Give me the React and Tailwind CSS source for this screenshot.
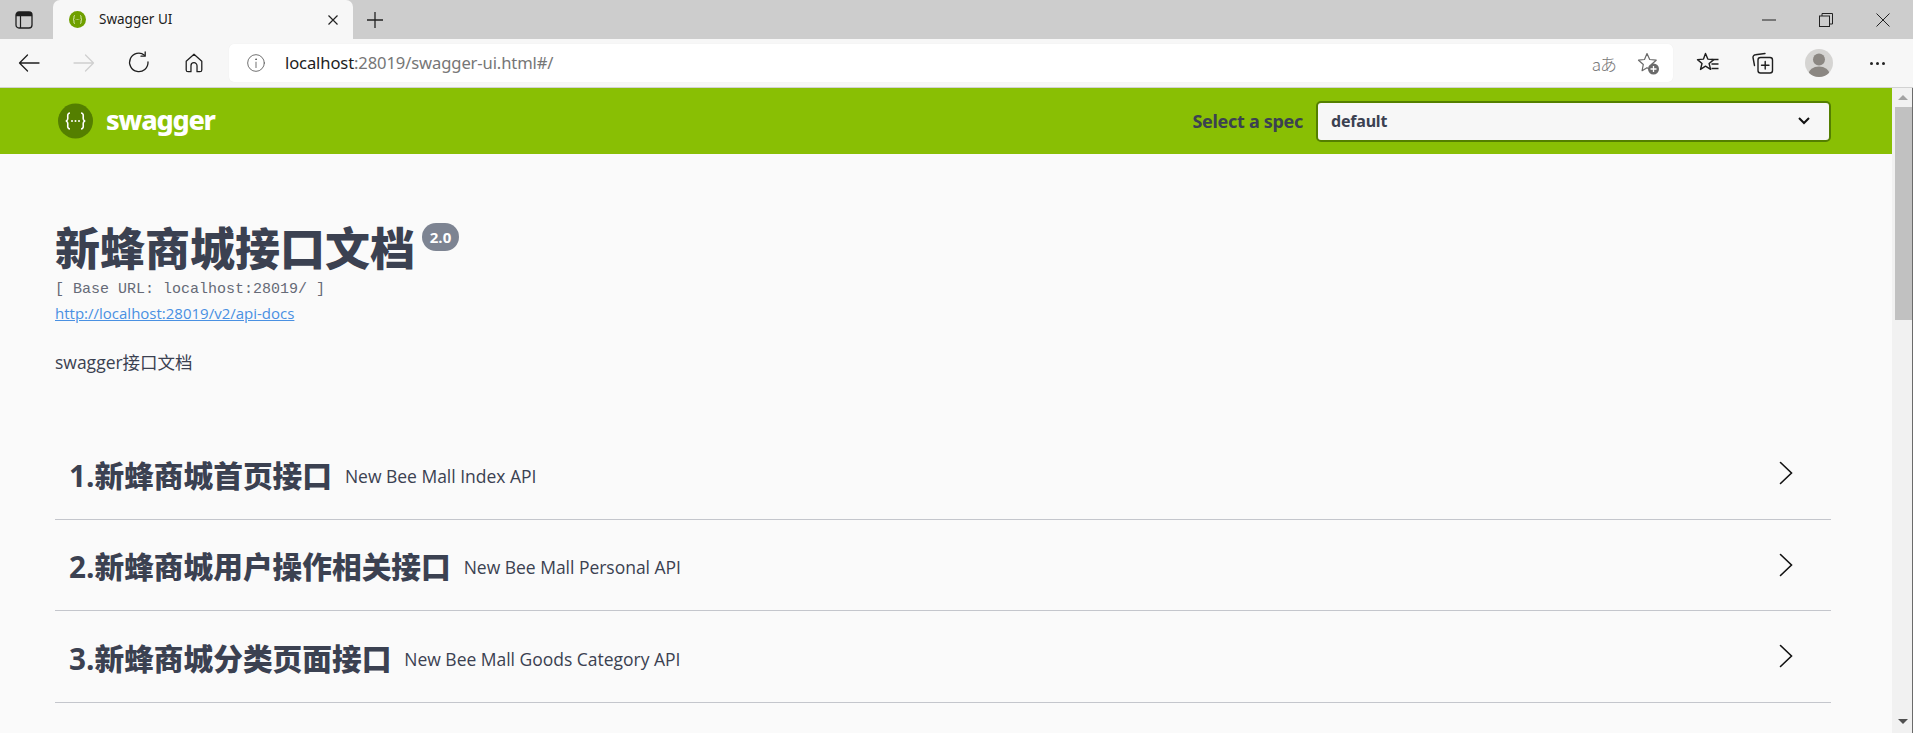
import React from "react";

function Icon({ size = 24, children, stroke = "#1f1f1f", sw = 1.4 }) {
  return (
    <svg width={size} height={size} viewBox="0 0 24 24" fill="none" stroke={stroke} strokeWidth={sw} strokeLinecap="round" strokeLinejoin="round">
      {children}
    </svg>
  );
}

function ToolButton({ children }) {
  return <div className="w-[55px] h-full flex items-center justify-center shrink-0">{children}</div>;
}

function Favicon() {
  return (
    <svg width="17" height="17" viewBox="0 0 17 17">
      <circle cx="8.5" cy="8.5" r="8.5" fill="#6fa000" />
      <path d="M6 4.5c-1.4 0-1 1.6-1 2.6 0 .8-.6 1.4-1 1.4.4 0 1 .6 1 1.4 0 1-.4 2.600 1 2.600M11 4.500c1.400 0 1 1.600 1 2.600 0 .8.600 1.400 1 1.400-.4 0-1 .6-1 1.400 0 1 .4 2.600-1 2.600" fill="none" stroke="#e8f2cc" strokeWidth="0.9" />
      <path d="M6.800 8.500h.6M8.200 8.500h.6M9.600 8.500h.6" stroke="#e8f2cc" strokeWidth="0.9" />
    </svg>
  );
}

function TabBar() {
  return (
    <div className="h-[39px] bg-[#cdcdcd] flex items-end shrink-0 relative">
      <div className="w-[53px] h-full flex items-center justify-center pr-[5px]">
        <svg width="18" height="18" viewBox="0 0 18 18" fill="none">
          <rect x="1" y="1" width="16" height="16" rx="3" stroke="#1f1f1f" strokeWidth="1.3" />
          <path d="M1 5.200V4a3 3 0 0 1 3-3h10a3 3 0 0 1 3 3v1.200z" fill="#1f1f1f" />
          <path d="M5.500 5v12" stroke="#1f1f1f" strokeWidth="1.2" />
        </svg>
      </div>
      <div className="w-[300px] h-full bg-[#f7f7f7] rounded-t-[7px] flex items-center pl-[16px] pr-[14px]">
        <Favicon />
        <span className="ml-[13px] text-[13.5px] text-[#1c1c1c] font-['Noto_Sans',sans-serif]">Swagger UI</span>
        <svg className="ml-auto" width="12" height="12" viewBox="0 0 12 12" stroke="#222" strokeWidth="1.2"><path d="M1.500 1.500l9 9M10.500 1.500l-9 9" /></svg>
      </div>
      <div className="ml-[13px] h-full flex items-center">
        <svg width="18" height="18" viewBox="0 0 18 18" stroke="#222" strokeWidth="1.3"><path d="M9 1v16M1 9h16" /></svg>
      </div>
      <div className="ml-auto h-full flex items-center pr-[23px]">
        <svg width="14" height="2" viewBox="0 0 14 2" stroke="#222"><path d="M0 1h14" /></svg>
        <svg className="ml-[43px]" width="14" height="14" viewBox="0 0 14 14" fill="none" stroke="#222"><rect x="0.5" y="3" width="10" height="10.500" /><path d="M3 3V.5h10.500V11H11" /></svg>
        <svg className="ml-[43px]" width="14" height="14" viewBox="0 0 14 14" stroke="#222"><path d="M.5.5l13 13M13.500.5l-13 13" /></svg>
      </div>
    </div>
  );
}

function AddressBar() {
  return (
    <div className="ml-[8px] w-[1444px] h-[38px] bg-white rounded-[5px] shrink-0 flex items-center pl-[17px] pr-[13px] shadow-[0_0_1px_rgba(0,0,0,0.08)]">
      <Icon size={20} stroke="#555" sw={1}>
        <circle cx="12" cy="12" r="10" />
        <path d="M12 11v6.500" />
        <circle cx="12" cy="7.500" r="0.5" fill="#555" />
      </Icon>
      <div className="ml-[19px] text-[16.6px] text-[#767676] font-['Noto_Sans',sans-serif] tracking-[-0.12px]">
        <span className="text-[#1d1d1d]">localhost</span>:28019/swagger-ui.html#/
      </div>
      <span className="ml-auto text-[17px] leading-none text-[#7a7a7a] font-light font-['Noto_Sans_CJK_JP',sans-serif] tracking-[-1px]">aあ</span>
      <div className="ml-[20px]">
        <svg width="24" height="24" viewBox="0 0 24 24" fill="none">
          <path d="M11 2.500l2.700 6 6.500.7-4.800 4.300 1.300 6.400-5.700-3.200-4.900 3 1.200-6.200L2.500 9.200l6-.7z" stroke="#6a6a6a" strokeWidth="1.2" strokeLinejoin="round" />
          <circle cx="17.500" cy="18" r="5.500" fill="#6a6a6a" />
          <path d="M17.500 15v6M14.500 18h6" stroke="#fff" strokeWidth="1.3" />
        </svg>
      </div>
    </div>
  );
}

function Toolbar() {
  return (
    <div className="h-[49px] bg-[#f7f7f7] border-b border-[#d2d2d2] flex items-center shrink-0 pl-[1px]">
      <ToolButton>
        <Icon size={24} sw={1.3}><path d="M22 12H2.500M10.500 4l-8 8 8 8" /></Icon>
      </ToolButton>
      <ToolButton>
        <Icon size={24} sw={1.3} stroke="#d0d0d0"><path d="M2 12h19.500M13.500 4l8 8-8 8" /></Icon>
      </ToolButton>
      <ToolButton>
        <Icon size={24} sw={1.3}>
          <path d="M17.500 4.200A9.200 9.200 0 1 0 21 11" />
          <path d="M18.200 1v4.200H14" />
        </Icon>
      </ToolButton>
      <ToolButton>
        <Icon size={22} sw={1.4}>
          <path d="M12 2.500l8.500 7.500v9.500a2 2 0 0 1-2 2h-3.200V15a3.300 3.300 0 0 0-6.600 0v6.500H5.500a2 2 0 0 1-2-2V10z" />
        </Icon>
      </ToolButton>
      <AddressBar />
      <div className="w-[7px] shrink-0" />
      <div className="flex items-center h-full">
        <ToolButton>
          <svg width="24" height="24" viewBox="0 0 24 24" fill="none" stroke="#1f1f1f" strokeWidth="1.4" strokeLinejoin="round" strokeLinecap="round">
            <path d="M9.500 2.500l2.300 5.600 6 .5-4.700 3.900 1.500 5.900-5.100-3.200-5 3.200 1.500-5.900L1.500 8.600l6-.5z" />
            <path d="M15.500 8.500h7M15.500 13h7M15.500 17.500h7" strokeLinecap="butt" />
          </svg>
        </ToolButton>
        <div className="w-[54px] h-full flex items-center justify-center shrink-0">
          <svg width="24" height="24" viewBox="0 0 24 24" fill="none" stroke="#1f1f1f" strokeWidth="1.4" strokeLinejoin="round" strokeLinecap="round">
            <rect x="8" y="6.500" width="14.500" height="15.500" rx="2.500" />
            <path d="M15 2.500l-9.500 1.300A2.500 2.500 0 0 0 3 6.500l1.500 8" />
            <path d="M15.200 10.500v7.500M11.500 14.200H19" />
          </svg>
        </div>
        <div className="w-[60px] h-full flex items-center justify-center shrink-0">
          <svg width="28" height="28" viewBox="0 0 28 28">
            <circle cx="14" cy="14" r="14" fill="#d5d4d2" />
            <clipPath id="pf"><circle cx="14" cy="14" r="14" /></clipPath>
            <g clipPath="url(#pf)" fill="#8b8782">
              <circle cx="14" cy="10.500" r="6" />
              <ellipse cx="14" cy="25" rx="10.500" ry="7.500" />
            </g>
          </svg>
        </div>
        <div className="w-[57px] h-full flex items-center justify-center gap-[3px] shrink-0">
          <span className="w-[3px] h-[3px] rounded-full bg-[#222]" />
          <span className="w-[3px] h-[3px] rounded-full bg-[#222]" />
          <span className="w-[3px] h-[3px] rounded-full bg-[#222]" />
        </div>
      </div>
    </div>
  );
}

function TopBar() {
  return (
    <div className="h-[66px] bg-[#89bf04] flex items-center pl-[58px] pr-[61px] shrink-0">
      <svg width="35" height="36" viewBox="0 0 35 36">
        <circle cx="17.500" cy="18" r="17.500" fill="#547f00" />
        <path d="M12 10c-3 0-2.200 3.300-2.200 5.200 0 1.500-1.200 2.800-2.100 2.800.9 0 2.100 1.300 2.100 2.800C9.800 22.700 9 26 12 26M23 10c3 0 2.200 3.300 2.200 5.200 0 1.500 1.200 2.800 2.100 2.800-.9 0-2.100 1.300-2.100 2.800 0 1.900.8 5.200-2.200 5.200" fill="none" stroke="#fff" strokeWidth="1.6" />
        <circle cx="14" cy="18" r="1" fill="#fff" />
        <circle cx="17.500" cy="18" r="1" fill="#fff" />
        <circle cx="21" cy="18" r="1" fill="#fff" />
      </svg>
      <span className="ml-[13px] text-[27px] font-extrabold text-white font-['Noto_Sans',sans-serif] tracking-[-1.2px] leading-none pb-[3px]">swagger</span>
      <span className="ml-auto mr-[13px] text-[18px] font-bold text-[#3b4151] font-['Noto_Sans',sans-serif] tracking-[-0.3px]">Select a spec</span>
      <div className="w-[515px] h-[41px] bg-[#f7f7f7] border-2 border-[#547f00] rounded-[5px] flex items-center pl-[13px] pr-[18px]">
        <span className="text-[16px] font-bold text-[#3b4151] font-['Noto_Sans',sans-serif] tracking-[-0.2px]">default</span>
        <svg className="ml-auto" width="14" height="10" viewBox="0 0 14 10" fill="none" stroke="#111" strokeWidth="2"><path d="M2 2l5 5 5-5" /></svg>
      </div>
    </div>
  );
}

function ApiTag({ num, title, desc }) {
  return (
    <div className="h-[91.5px] border-b border-[#c4c6cc] flex items-center pl-[14px] pr-[38px]">
      <span className="text-[29.7px] font-black text-[#3b4151] leading-none pt-[5px]"><span className="font-bold">{num}</span>{title}</span>
      <span className="ml-[13px] text-[17.5px] text-[#3b4151] pt-[5px] tracking-[-0.02px]">{desc}</span>
      <svg className="ml-auto" width="14" height="24" viewBox="0 0 14 24" fill="none" stroke="#111" strokeWidth="1.6" strokeLinecap="round">
        <path d="M1.500 1.500L12.500 12 1.500 22.500" />
      </svg>
    </div>
  );
}

function Scrollbar() {
  return (
    <div className="w-[21px] bg-[#f1f1f1] border-r border-[#6b6b6b] flex flex-col items-center shrink-0">
      <div className="h-[19px] flex items-center justify-center pl-[2px]">
        <div className="w-0 h-0 border-x-[5px] border-x-transparent border-b-[5px] border-b-[#a3a3a3]" />
      </div>
      <div className="w-[17px] h-[213px] ml-[2px] bg-[#c1c1c1]" />
      <div className="mt-auto h-[14px] flex items-start justify-center pl-[2px]">
        <div className="w-0 h-0 border-x-[5px] border-x-transparent border-t-[5px] border-t-[#505050]" />
      </div>
    </div>
  );
}

export default function App() {
  return (
    <div className="h-[733px] w-full overflow-hidden flex flex-col bg-[#fafafa] font-['Open_Sans','Noto_Sans_CJK_SC',sans-serif] text-[#3b4151]">
      <TabBar />
      <Toolbar />
      <div className="flex flex-1 min-h-0">
        <div className="flex-1 min-w-0 overflow-hidden">
          <TopBar />
          <div className="pl-[55px] pr-[61px]">
            <div className="pt-[67px] flex items-start">
              <h1 className="text-[45px] font-black leading-[56px]">新蜂商城接口文档</h1>
              <span className="ml-[7px] mt-[2px] h-[28px] w-[37px] rounded-full bg-[#7d8492] text-white text-[15px] font-bold flex items-center justify-center">2.0</span>
            </div>
            <div className="text-[15px] leading-[20px] mt-[3px] text-[#666a77] font-['Liberation_Mono',monospace]">[ Base URL: localhost:28019/ ]</div>
            <div className="mt-[3px] leading-[20px]">
              <a href="#" className="text-[15px] text-[#4990e2] underline">http://localhost:28019/v2/api-docs</a>
            </div>
            <p className="mt-[26px] text-[17.5px] leading-[26px]">swagger接口文档</p>
            <div className="mt-[53px]">
              <ApiTag num="1." title="新蜂商城首页接口" desc="New Bee Mall Index API" />
              <ApiTag num="2." title="新蜂商城用户操作相关接口" desc="New Bee Mall Personal API" />
              <ApiTag num="3." title="新蜂商城分类页面接口" desc="New Bee Mall Goods Category API" />
            </div>
          </div>
        </div>
        <Scrollbar />
      </div>
    </div>
  );
}
